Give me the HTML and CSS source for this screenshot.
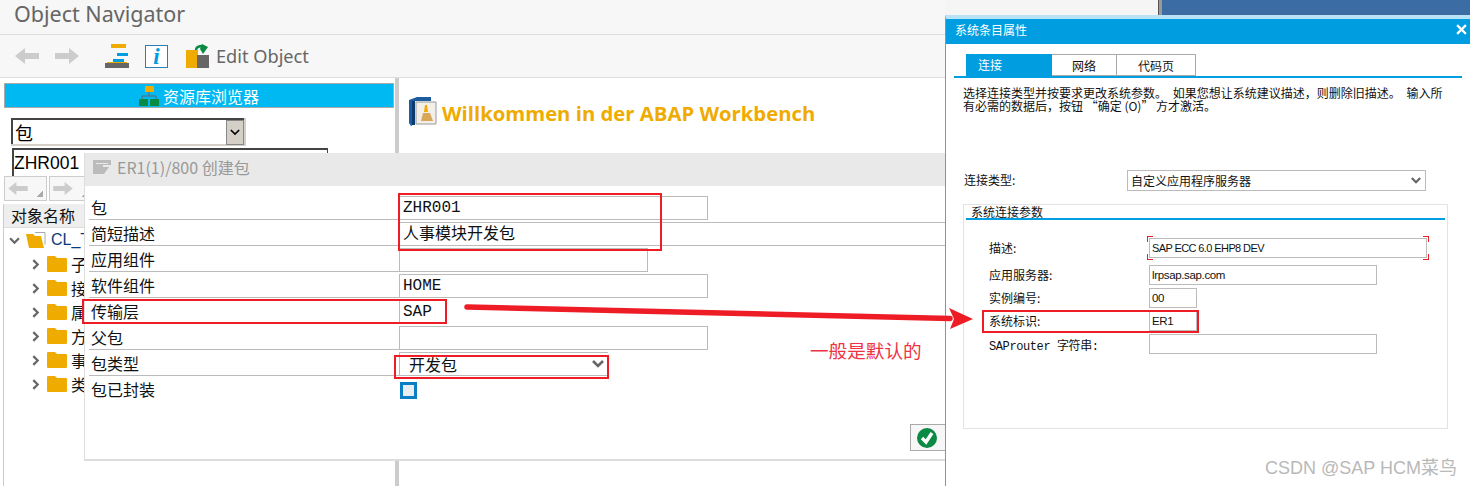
FILE: index.html
```html
<!DOCTYPE html>
<html lang="zh">
<head>
<meta charset="utf-8">
<title>Object Navigator</title>
<link rel="stylesheet" href="styles.css">
</head>
<body>
<div class="desktop">
  <div class="main">
    <header class="titlebar">Object Navigator</header>
    <div class="toolbar">
      <svg class="tool-arrow" viewBox="0 0 24 16"><path d="M0 8 10 0v5h14v6H10v5z"/></svg>
      <svg class="tool-arrow arrow-next" viewBox="0 0 24 16"><path d="M24 8 14 0v5H0v6h14v5z"/></svg>
      <svg class="tool-hier" viewBox="0 0 24 24"><path fill="#f0ab00" d="M6 0h15v4H6z"/><path fill="#009de0" d="M12 9h11v3H12zM8 15h11v3H8z"/><path fill="#f0ab00" d="M2 18h20v2H2z"/><path fill="#666" d="M0 19h24v5H0z"/></svg>
      <span class="tool-info">i</span>
      <svg class="tool-edit" viewBox="0 0 23 24"><path fill="#f0ab00" d="M0 6h12v18H0z"/><path fill="#666" d="M11 11h12v13H11z"/><path fill="none" stroke="#0a8a43" stroke-width="2.5" d="M10 6c0-3 3-4 7-4"/><path fill="#0a8a43" d="M16 0l6 3-5 7-3-5z"/></svg>
      <span class="tool-label">Edit Object</span>
    </div>
    <div class="content">
      <aside class="left">
        <div class="repo-btn">
          <svg class="repo-icon" viewBox="0 0 20 20"><path fill="#f0ab00" d="M6 0h9v6H6z"/><path fill="none" stroke="#666" d="M10 6v4M3 13v-3h14v3"/><path fill="#0a8a43" d="M0 13h9v7H0zM11 13h9v7h-9z"/></svg>
          <span>资源库浏览器</span>
        </div>
        <div class="obj-select"><span class="obj-text">包</span><span class="obj-btn"><svg viewBox="0 0 12 8"><path d="M1 1l5 5 5-5" fill="none" stroke="#000" stroke-width="2"/></svg></span></div>
        <div class="obj-input">ZHR001</div>
        <div class="nav-btns">
          <span class="nav-btn"><svg viewBox="0 0 24 16"><path d="M0 8 10 0v5h14v6H10v5z"/></svg></span>
          <span class="nav-btn"><svg viewBox="0 0 24 16"><path d="M24 8 14 0v5H0v6h14v5z"/></svg></span>
        </div>
        <div class="tree">
          <div class="tree-head">对象名称</div>
          <div class="tree-root">
            <svg class="chev" viewBox="0 0 10 10"><path d="M1 3l4 4 4-4" fill="none" stroke="#666" stroke-width="2"/></svg>
            <svg class="folder-open" viewBox="0 0 20 16"><path fill="#f0ab00" d="M0 2h7l2 2h6l3 12H3z"/><path fill="none" stroke="#aaa" d="M9 .5h10v12"/></svg>
            <span class="root-text">CL_T</span>
          </div>
          <div class="tree-row"><svg class="chev" viewBox="0 0 10 10"><path d="M3 1l4 4-4 4" fill="none" stroke="#666" stroke-width="2"/></svg><svg class="folder" viewBox="0 0 20 16"><path fill="#f0ab00" d="M0 1q0-1 1-1h7l2 2h9q1 0 1 1v12q0 1-1 1H1q-1 0-1-1z"/></svg><span>子</span></div>
          <div class="tree-row"><svg class="chev" viewBox="0 0 10 10"><path d="M3 1l4 4-4 4" fill="none" stroke="#666" stroke-width="2"/></svg><svg class="folder" viewBox="0 0 20 16"><path fill="#f0ab00" d="M0 1q0-1 1-1h7l2 2h9q1 0 1 1v12q0 1-1 1H1q-1 0-1-1z"/></svg><span>接</span></div>
          <div class="tree-row"><svg class="chev" viewBox="0 0 10 10"><path d="M3 1l4 4-4 4" fill="none" stroke="#666" stroke-width="2"/></svg><svg class="folder" viewBox="0 0 20 16"><path fill="#f0ab00" d="M0 1q0-1 1-1h7l2 2h9q1 0 1 1v12q0 1-1 1H1q-1 0-1-1z"/></svg><span>属</span></div>
          <div class="tree-row"><svg class="chev" viewBox="0 0 10 10"><path d="M3 1l4 4-4 4" fill="none" stroke="#666" stroke-width="2"/></svg><svg class="folder" viewBox="0 0 20 16"><path fill="#f0ab00" d="M0 1q0-1 1-1h7l2 2h9q1 0 1 1v12q0 1-1 1H1q-1 0-1-1z"/></svg><span>方</span></div>
          <div class="tree-row"><svg class="chev" viewBox="0 0 10 10"><path d="M3 1l4 4-4 4" fill="none" stroke="#666" stroke-width="2"/></svg><svg class="folder" viewBox="0 0 20 16"><path fill="#f0ab00" d="M0 1q0-1 1-1h7l2 2h9q1 0 1 1v12q0 1-1 1H1q-1 0-1-1z"/></svg><span>事</span></div>
          <div class="tree-row"><svg class="chev" viewBox="0 0 10 10"><path d="M3 1l4 4-4 4" fill="none" stroke="#666" stroke-width="2"/></svg><svg class="folder" viewBox="0 0 20 16"><path fill="#f0ab00" d="M0 1q0-1 1-1h7l2 2h9q1 0 1 1v12q0 1-1 1H1q-1 0-1-1z"/></svg><span>类</span></div>
        </div>
      </aside>
      <div class="splitter"></div>
      <main class="welcome">
        <svg class="welcome-icon" viewBox="0 0 28 30"><path fill="#1d5c9e" d="M0 3 8 0h14v4H5v23l-3 2-2-3z"/><path fill="#0d3d70" d="M3 4h3v24H3z"/><path fill="#f2efe8" stroke="#999" d="M7 5h20v22H7z"/><path fill="#f0ab00" d="M16 8l2 0 1 7h-4z"/><path fill="#d9a75a" d="M12 24l2-8h7l3 8z"/></svg>
        <h1 class="welcome-title">Willkommen in der ABAP Workbench</h1>
      </main>
    </div>
  </div>

  <section class="pkg-dialog">
    <div class="pkg-head">
      <svg class="pkg-icon" viewBox="0 0 18 14"><path fill="#bbb" d="M0 0h18v5h-8v2h6l-5 7H0z"/><path fill="#e9e9e9" d="M3 3h12v1H3z"/></svg>
      <span>ER1(1)/800 创建包</span>
    </div>
    <div class="pkg-form">
      <div class="pkg-label">包</div><div class="pkg-cell"><div class="pkg-field w-long">ZHR001</div></div>
      <div class="pkg-label">简短描述</div><div class="pkg-cell"><div class="pkg-field w-full">人事模块开发包</div></div>
      <div class="pkg-label">应用组件</div><div class="pkg-cell"><div class="pkg-field w-mid"></div></div>
      <div class="pkg-label">软件组件</div><div class="pkg-cell"><div class="pkg-field w-long">HOME</div></div>
      <div class="pkg-label">传输层</div><div class="pkg-cell"><div class="pkg-field w-short">SAP</div></div>
      <div class="pkg-label">父包</div><div class="pkg-cell"><div class="pkg-field w-long"></div></div>
      <div class="pkg-label">包类型</div><div class="pkg-cell"><div class="pkg-field w-select"><span>开发包</span><svg class="dd" viewBox="0 0 12 8"><path d="M1 1l5 5 5-5" fill="none" stroke="#666" stroke-width="2.6"/></svg></div></div>
      <div class="pkg-label no-line">包已封装</div><div class="pkg-cell"><span class="check"></span></div>
    </div>
    <div class="pkg-foot">
      <span class="ok-btn"><svg viewBox="0 0 20 20"><circle cx="10" cy="10" r="10" fill="#0a8a43"/><path d="M5 10l4 4 6-9" fill="none" stroke="#fff" stroke-width="3.4"/></svg></span>
    </div>
  </section>

  <div class="backdrop-top"><span class="bt-light"></span><span class="bt-bar"></span><span class="bt-blue"></span></div>

  <section class="sys-dialog">
    <div class="sys-head"><span>系统条目属性</span><svg class="sys-close" viewBox="0 0 10 10"><path d="M1 1l8 8M9 1l-8 8" stroke="#fff" stroke-width="2"/></svg></div>
    <div class="sys-body">
      <div class="tabs">
        <span class="tab tab-on">连接</span><span class="tab tab-b">网络</span><span class="tab tab-c">代码页</span>
      </div>
      <p class="sys-desc"><span class="desc-wide">选择连接类型并按要求更改系统参数。 如果您想让系统建议描述，则删除旧描述。 输入所</span>有必需的数据后，按钮 “确定 (O)” 方才激活。</p>
      <div class="conn-row">
        <span class="conn-label">连接类型:</span>
        <div class="conn-select"><span>自定义应用程序服务器</span><svg class="dd" viewBox="0 0 12 8"><path d="M1 1l5 5 5-5" fill="none" stroke="#666" stroke-width="2.6"/></svg></div>
      </div>
      <div class="group">
        <div class="group-title">系统连接参数</div>
        <div class="group-grid">
          <span class="g-label g-first">描述:</span><div class="g-field g-desc g-first">SAP ECC 6.0 EHP8 DEV<i class="mark tl"></i><i class="mark tr"></i><i class="mark bl"></i><i class="mark br"></i></div>
          <span class="g-label">应用服务器:</span><div class="g-field g-long">lrpsap.sap.com</div>
          <span class="g-label">实例编号:</span><div class="g-field g-short">00</div>
          <span class="g-label">系统标识:</span><div class="g-field g-short">ER1</div>
          <span class="g-label g-mono">SAProuter 字符串:</span><div class="g-field g-long"></div>
        </div>
      </div>
    </div>
  </section>

  <i class="redbox rb-name"></i>
  <i class="redbox rb-layer"></i>
  <i class="redbox rb-type"></i>
  <i class="redbox rb-sid"></i>
  <svg class="arrow" viewBox="0 0 1470 486">
    <path d="M467 307 950 318.500" fill="none" stroke="#ee1c25" stroke-width="5.500" stroke-linecap="round"/>
    <path d="M949 308 973 319 950 329 954 319z" fill="#ee1c25"/>
  </svg>
  <span class="note">一般是默认的</span>
  <span class="watermark">CSDN @SAP HCM菜鸟</span>
</div>
</body>
</html>
```
FILE: styles.css
```css
* { box-sizing: border-box; }
html, body { margin: 0; padding: 0; background: #fff; }
body { font-family: "Noto Sans CJK SC", "Noto Sans", sans-serif; }
.desktop { position: relative; width: 1470px; height: 486px; overflow: hidden; background: #fff; }

.main { width: 945px; height: 486px; display: flex; flex-direction: column; }
.titlebar { height: 35px; padding-left: 14px; background: #f7f7f7; border-bottom: 1px solid #ddd; font: 21.500px/28px "Noto Sans", sans-serif; color: #666; }
.toolbar { height: 43px; display: flex; align-items: center; padding-left: 15px; background: #f7f7f7; border-bottom: 1px solid #ddd; }
.tool-arrow { width: 24px; height: 16px; fill: #ccc; }
.arrow-next { margin-left: 16px; }
.tool-hier { width: 24px; height: 24px; margin-left: 26px; }
.tool-info { width: 23px; height: 23px; margin-left: 16px; border: 1px solid #2a7fb8; background: #fff; font: italic bold 23px/21px "Liberation Serif", serif; color: #009de0; text-align: center; }
.tool-edit { width: 23px; height: 24px; margin-left: 18px; }
.tool-label { margin-left: 7px; font: 18.200px/24px "Noto Sans", sans-serif; color: #666; }

.content { flex: 1; display: flex; min-height: 0; }
.left { width: 395px; flex: none; }
.splitter { width: 4px; background: #ccc; flex: none; }
.welcome { flex: 1; display: flex; align-items: flex-start; padding: 19px 0 0 10px; }
.welcome-icon { width: 28px; height: 30px; flex: none; }
.welcome-title { margin: 3px 0 0 5px; font: bold 20.300px/26px "Open Sans", sans-serif; color: #f0ab00; white-space: nowrap; }

.repo-btn { margin: 5px 1px 0 4px; height: 25px; display: flex; align-items: center; justify-content: center; gap: 4px; background: #00b9f2; border: 1px solid #aaa; color: #fff; font-size: 16px; }
.repo-icon { width: 20px; height: 20px; }
.obj-select { width: 235px; height: 28px; margin: 10px 0 0 11px; display: flex; justify-content: space-between; background: #fff; border: solid #d4d0c8; border-width: 0 2px 2px 0; box-shadow: inset 2px 2px 0 #444; }
.obj-text { padding-left: 4px; font-size: 18px; line-height: 28px; color: #000; }
.obj-btn { width: 18px; height: 25px; margin-top: 2px; display: flex; align-items: center; justify-content: center; background: #d4d0c8; border: 1px solid #888; }
.obj-btn svg { width: 10px; height: 7px; }
.obj-input { width: 316px; height: 28px; margin: 2px 0 0 12px; padding-left: 0; border: solid #444; border-width: 2px 1px 0 2px; font: 17.500px/26px "Liberation Sans", sans-serif; color: #000; }
.nav-btns { display: flex; gap: 2px; margin-left: 4px; height: 25px; }
.nav-btn { width: 43px; height: 25px; border: 1px solid #ccc; background: #f7f7f7 linear-gradient(135deg, transparent 50%, #aaa 50%) no-repeat right 3px bottom 3px / 6px 6px; display: flex; align-items: center; padding-left: 3px; }
.nav-btn svg { width: 20px; height: 13px; fill: #ccc; }
.tree { margin: 3px 0 0 3px; height: 282px; border-left: 1px solid #ccc; }
.tree-head { height: 24px; padding-left: 7px; background: #eee; border-bottom: 1px solid #ddd; font-size: 16px; line-height: 22px; color: #111; }
.tree-root { height: 24px; display: flex; align-items: center; padding-left: 5px; }
.tree-root .chev { width: 11px; height: 11px; }
.folder-open { width: 20px; height: 16px; margin-left: 6px; }
.root-text { margin-left: 5px; font: 16px/24px "Liberation Sans", sans-serif; color: #0a3a7a; }
.tree-row { height: 24px; display: flex; align-items: center; padding-left: 26px; font-size: 16px; color: #111; }
.tree-row .chev { width: 11px; height: 11px; }
.folder { width: 20px; height: 16px; margin-left: 6px; margin-right: 4px; }

.pkg-dialog { position: absolute; left: 84px; top: 153px; width: 861px; height: 308px; background: #fff; border: solid #ddd; border-width: 0 0 2px 1px; display: flex; flex-direction: column; }
.pkg-head { height: 33px; display: flex; align-items: center; gap: 6px; padding: 0 0 6px 8px; background: #e9e9e9; color: #999; font-size: 16px; flex: none; }
.pkg-icon { width: 18px; height: 14px; }
.pkg-form { padding: 8px 0 0 4px; display: grid; grid-template-columns: 310px 1fr; grid-auto-rows: 26px; }
.pkg-label { padding-left: 2px; border-bottom: 1px solid #bbb; font-size: 16px; line-height: 26px; color: #111; }
.no-line { border-bottom: 0; }
.pkg-cell { padding-top: 2px; }
.pkg-field { height: 24px; padding-left: 3px; display: flex; align-items: center; border: 1px solid #bbb; font: 16px/22px "Liberation Mono", "Noto Sans CJK SC", monospace; color: #111; }
.w-long { width: 309px; }
.w-full { width: 100%; padding-top: 2px; border-right: 0; }
.w-mid { width: 249px; }
.w-short { width: 47px; border-width: 0 0 0 1px; }
.w-select { width: 209px; padding: 0 4px 0 9px; justify-content: space-between; border-width: 1px 0 1px 1px; font-family: "Noto Sans CJK SC", sans-serif; }
.dd { width: 12px; height: 8px; flex: none; }
.check { display: block; width: 17px; height: 17px; margin: 4px 0 0 1px; background: #e8edf2; border: 3px solid #0a7fc4; }
.pkg-foot { flex: 1; display: flex; justify-content: flex-end; align-items: flex-start; padding-top: 22px; }
.ok-btn { width: 35px; height: 27px; display: flex; align-items: center; padding-left: 6px; background: #f7f7f7; border: 1px solid #aaa; border-right: 0; }
.ok-btn svg { width: 20px; height: 20px; }

.backdrop-top { position: absolute; left: 945px; top: 0; width: 525px; height: 15px; display: flex; }
.bt-light { width: 213px; background: #f5f5f5; }
.bt-bar { width: 4px; background: #999; border-left: 1px solid #555; }
.bt-blue { flex: 1; background: #3b6ca3; }

.sys-dialog { position: absolute; left: 945px; top: 15px; width: 525px; height: 471px; background: #fff; border-left: 1px solid #4aa8e0; border-top: 4px solid #b8e2f6; display: flex; flex-direction: column; }
.sys-head { height: 25px; flex: none; display: flex; align-items: center; justify-content: space-between; padding: 0 3px 4px 9px; background: #009de0; color: #fff; font-size: 12px; }
.sys-close { width: 11px; height: 11px; }
.sys-body { flex: 1; padding: 10px 8px 0 8px; display: flex; flex-direction: column; }
.tabs { height: 24px; padding-left: 12px; display: flex; border-bottom: 2px solid #009de0; flex: none; }
.tab { height: 22px; text-align: center; font-size: 12px; line-height: 22px; color: #111; border: 1px solid #aaa; border-left: 0; }
.tab-on { width: 86px; padding-left: 12px; text-align: left; background: #009de0; color: #fff; border: 0; }
.tab-b { width: 65px; }
.tab-c { width: 79px; }
.sys-desc { width: 484px; margin: 9px 0 0 9px; font-size: 12px; line-height: 12.500px; color: #111; }
.desc-wide { word-spacing: 3px; }
.conn-row { margin: 58px 0 0 10px; height: 21px; display: flex; }
.conn-label { width: 163px; font-size: 12px; line-height: 19px; color: #111; }
.conn-select { width: 299px; height: 21px; padding: 0 4px 0 3px; display: flex; align-items: center; justify-content: space-between; border: 1px solid #bbb; font-size: 12px; color: #111; }
.conn-select .dd { width: 10px; height: 7px; }
.group { width: 485px; height: 225px; margin: 13px 0 0 9px; border: 1px solid #e3e3e3; padding: 0 2px; }
.group-title { height: 15px; padding-left: 5px; border-bottom: 2px solid #009de0; font-size: 12px; line-height: 13px; color: #111; }
.group-grid { padding: 18px 0 0 23px; display: grid; grid-template-columns: 160px 1fr; row-gap: 3px; }
.g-first { margin-bottom: 4px; }
.g-label { height: 20px; font-size: 12px; line-height: 19px; color: #111; }
.g-mono { padding-top: 4px; font-family: "Liberation Mono", "Noto Sans CJK SC", monospace; letter-spacing: -.4px; }
.g-field { position: relative; height: 20px; padding-left: 2px; border: 1px solid #bbb; font: 11.500px/18px "Liberation Sans", sans-serif; letter-spacing: -.35px; color: #111; }
.g-desc { width: 278px; font-size: 11px; letter-spacing: -.6px; }
.g-long { width: 228px; }
.g-short { width: 48px; }
.mark { position: absolute; width: 6px; height: 6px; border: solid #ee1c25; border-width: 0; }
.tl { left: -3px; top: -3px; border-width: 1px 0 0 1px; }
.tr { right: -3px; top: -3px; border-width: 1px 1px 0 0; }
.bl { left: -3px; bottom: -3px; border-width: 0 0 1px 1px; }
.br { right: -3px; bottom: -3px; border-width: 0 1px 1px 0; }

.redbox { position: absolute; border: 2px solid #ee1c25; }
.rb-name { left: 398px; top: 193px; width: 264px; height: 58px; }
.rb-layer { left: 82px; top: 299px; width: 365px; height: 25px; }
.rb-type { left: 394px; top: 355px; width: 215px; height: 24px; }
.rb-sid { left: 982px; top: 310px; width: 217px; height: 23px; }
.arrow { position: absolute; left: 0; top: 0; width: 1470px; height: 486px; pointer-events: none; }
.note { position: absolute; left: 810px; top: 336px; font-size: 18.600px; line-height: 28px; color: #ee3344; }
.watermark { position: absolute; left: 1265px; top: 456px; font: 18px/24px "Liberation Sans", "Noto Sans CJK SC", sans-serif; color: #b9b9b9; }
```
